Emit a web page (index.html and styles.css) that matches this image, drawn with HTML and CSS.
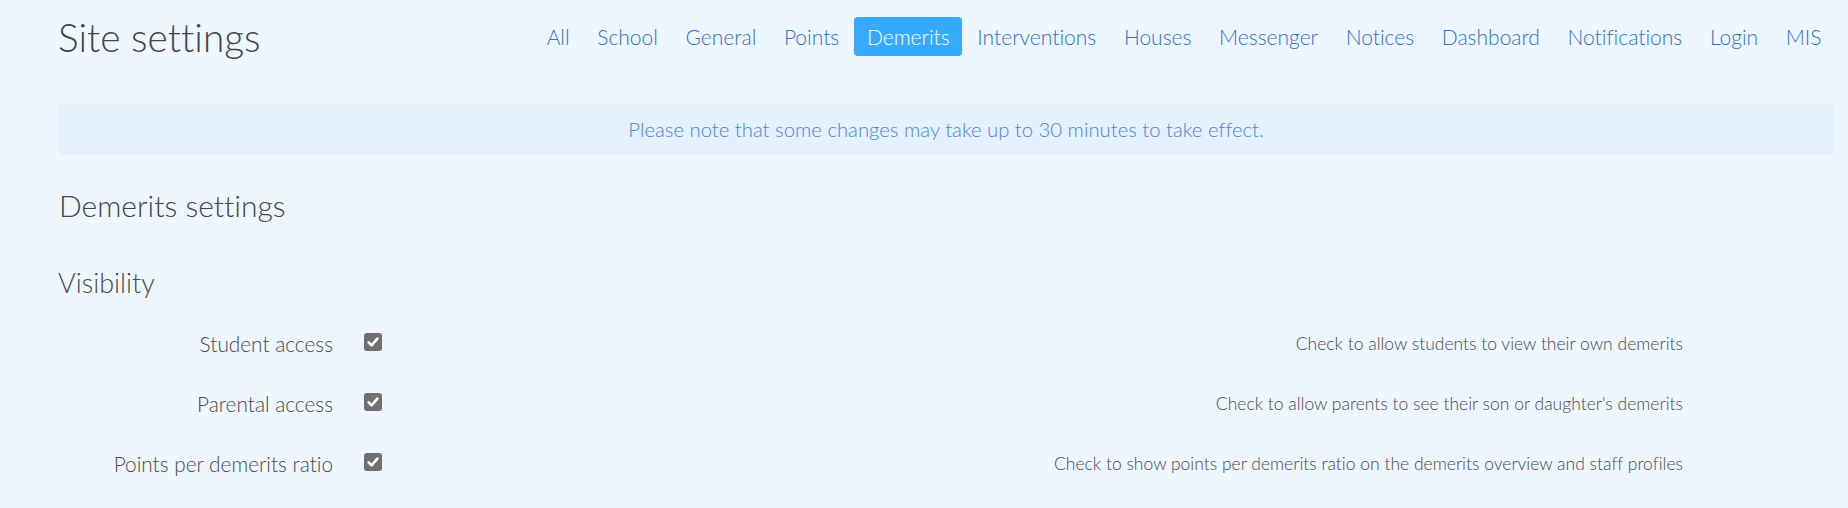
FILE: index.html
```html
<!DOCTYPE html>
<html lang="en">
<head>
<meta charset="utf-8">
<title>Site settings</title>
<link rel="stylesheet" href="styles.css">
</head>
<body>
<div class="container">
  <header class="page-header">
    <h1 class="title">Site settings</h1>
    <nav class="nav">
      <a class="nav-link" href="#">All</a>
      <a class="nav-link" href="#">School</a>
      <a class="nav-link" href="#">General</a>
      <a class="nav-link" href="#">Points</a>
      <a class="nav-link active" href="#">Demerits</a>
      <a class="nav-link" href="#">Interventions</a>
      <a class="nav-link" href="#">Houses</a>
      <a class="nav-link" href="#">Messenger</a>
      <a class="nav-link" href="#">Notices</a>
      <a class="nav-link" href="#">Dashboard</a>
      <a class="nav-link" href="#">Notifications</a>
      <a class="nav-link" href="#">Login</a>
      <a class="nav-link" href="#">MIS</a>
    </nav>
  </header>

  <div class="alert">Please note that some changes may take up to 30 minutes to take effect.</div>

  <h2 class="section-title">Demerits settings</h2>
  <h3 class="group-title">Visibility</h3>

  <div class="form">
    <div class="form-row">
      <label class="form-label">Student access</label>
      <span class="checkbox"><svg viewBox="0 0 18 18" width="18" height="18"><path d="M4.6 9.4 L7.6 12.3 L13.4 5.6" fill="none" stroke="#fff" stroke-width="2.6" stroke-linecap="round" stroke-linejoin="round"/></svg></span>
      <span class="form-help">Check to allow students to view their own demerits</span>
    </div>
    <div class="form-row">
      <label class="form-label">Parental access</label>
      <span class="checkbox"><svg viewBox="0 0 18 18" width="18" height="18"><path d="M4.6 9.4 L7.6 12.3 L13.4 5.6" fill="none" stroke="#fff" stroke-width="2.6" stroke-linecap="round" stroke-linejoin="round"/></svg></span>
      <span class="form-help">Check to allow parents to see their son or daughter's demerits</span>
    </div>
    <div class="form-row">
      <label class="form-label">Points per demerits ratio</label>
      <span class="checkbox"><svg viewBox="0 0 18 18" width="18" height="18"><path d="M4.6 9.4 L7.6 12.3 L13.4 5.6" fill="none" stroke="#fff" stroke-width="2.6" stroke-linecap="round" stroke-linejoin="round"/></svg></span>
      <span class="form-help">Check to show points per demerits ratio on the demerits overview and staff profiles</span>
    </div>
  </div>
</div>
</body>
</html>
```

FILE: styles.css
```css
html, body {
  margin: 0;
  padding: 0;
}
body {
  background: #eef6ff;
  font-family: Lato, "Open Sans", sans-serif;
  font-weight: 300;
  color: #4a4a4a;
  font-variant-ligatures: none;
}
.container {
  padding: 0 14px 0 58px;
}
.page-header {
  display: flex;
  justify-content: space-between;
  align-items: center;
  padding-top: 12px;
  height: 49px;
}
.title {
  margin: 0;
  font-size: 38.8px;
  line-height: 48px;
  font-weight: 300;
  color: #444;
}
.nav {
  display: flex;
  gap: 2.6px;
  align-self: flex-start;
  margin-top: 5px;
}
.nav-link {
  display: block;
  padding: 0 12.5px;
  height: 39px;
  line-height: 39px;
  font-size: 21px;
  color: #2f72c4;
  text-decoration: none;
  border-radius: 4px;
}
.nav-link.active {
  background: #36aaff;
  color: #fff;
}
.alert {
  margin-top: 43px;
  height: 51px;
  line-height: 51px;
  background: #e3f1fe;
  border-radius: 4px;
  text-align: center;
  font-size: 20.3px;
  color: #4f84cc;
}
.section-title {
  margin: 32px 0 0 1px;
  font-size: 30px;
  line-height: 36px;
  font-weight: 300;
  color: #444;
}
.group-title {
  margin: 43px 0 0;
  font-size: 27px;
  line-height: 33px;
  font-weight: 300;
  color: #4a4a4a;
}
.form {
  margin-top: 14px;
}
.form-row {
  display: grid;
  grid-template-columns: 275px 18px 1fr;
  column-gap: 31px;
  align-items: center;
  height: 60px;
}
.form-label {
  text-align: right;
  font-size: 20.8px;
  color: #4a4a4a;
}
.checkbox {
  display: block;
  width: 18px;
  height: 18px;
  background: #707070;
  border-radius: 3px;
  margin-top: -2px;
}
.checkbox svg {
  display: block;
}
.form-help {
  text-align: right;
  padding-right: 151px;
  font-size: 17.5px;
  color: #4a4a4a;
}
```
